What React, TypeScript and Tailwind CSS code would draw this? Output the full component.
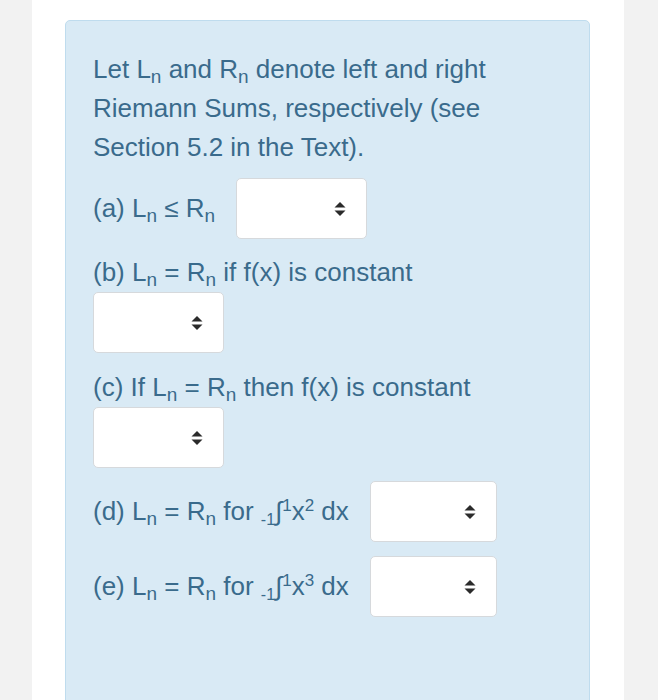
import React from 'react'

const Sub = ({ children, small }: { children: React.ReactNode; small?: boolean }) => (
  <span className={`${small ? 'text-[16px]' : 'text-[19px]'} leading-[0] relative top-[5px]`}>
    {children}
  </span>
)

const Sup = ({ children }: { children: React.ReactNode }) => (
  <span className="text-[17px] leading-[0] relative -top-[9px]">{children}</span>
)

const Ln = () => (
  <>
    L<Sub>n</Sub>
  </>
)

const Rn = () => (
  <>
    R<Sub>n</Sub>
  </>
)

function SelectBox({ w = 'w-[131px]' }: { w?: string }) {
  return (
    <div
      className={`${w} h-[61px] shrink-0 bg-white border border-[#d6d9dc] rounded-[5px] flex items-center justify-end pr-[19px]`}
    >
      <svg width="12" height="16" viewBox="0 0 12 16" className="mr-[1px]">
        <path d="M6 1 L11.5 6.5 L0.5 6.5 Z" fill="#2b2b2b" />
        <path d="M0.5 9.5 L11.5 9.5 L6 15 Z" fill="#2b2b2b" />
      </svg>
    </div>
  )
}

export default function App() {
  return (
    <main
      className="h-[700px] overflow-hidden bg-[#f2f2f2] flex"
      style={{ fontFamily: '"Liberation Sans", Arial, sans-serif' }}
    >
      <div className="ml-[32px] w-[592px] bg-white pt-[20px] pl-[33px] pr-[34px]">
        {/* BLUE INFO BOX */}
        <div className="min-h-[720px] bg-[#d9eaf5] border border-[#bfdcee] rounded-[5px] pl-[27px] pr-[20px] pt-[29px] text-[#3a6b8c] text-[26px] leading-[39px]">
          <p>
            Let <Ln /> and <Rn /> denote left and right Riemann Sums, respectively (see Section 5.2
            in the Text).
          </p>

          <div className="flex items-center mt-[11px]">
            <span>
              (a) <Ln /> ≤ <Rn />
            </span>
            <div className="ml-[21px]">
              <SelectBox />
            </div>
          </div>

          <div className="mt-[14px]">
            (b) <Ln /> = <Rn /> if f(x) is constant
          </div>
          <SelectBox />

          <div className="mt-[15px]">
            (c) If <Ln /> = <Rn /> then f(x) is constant
          </div>
          <SelectBox />

          <div className="flex items-center mt-[13px]">
            <span>
              (d) <Ln /> = <Rn /> for <Sub small>-1</Sub>∫<Sup>1</Sup>x<Sup>2</Sup> dx
            </span>
            <div className="ml-[21px]">
              <SelectBox w="w-[127px]" />
            </div>
          </div>

          <div className="flex items-center mt-[14px]">
            <span>
              (e) <Ln /> = <Rn /> for <Sub small>-1</Sub>∫<Sup>1</Sup>x<Sup>3</Sup> dx
            </span>
            <div className="ml-[21px]">
              <SelectBox w="w-[127px]" />
            </div>
          </div>
        </div>
      </div>
    </main>
  )
}
